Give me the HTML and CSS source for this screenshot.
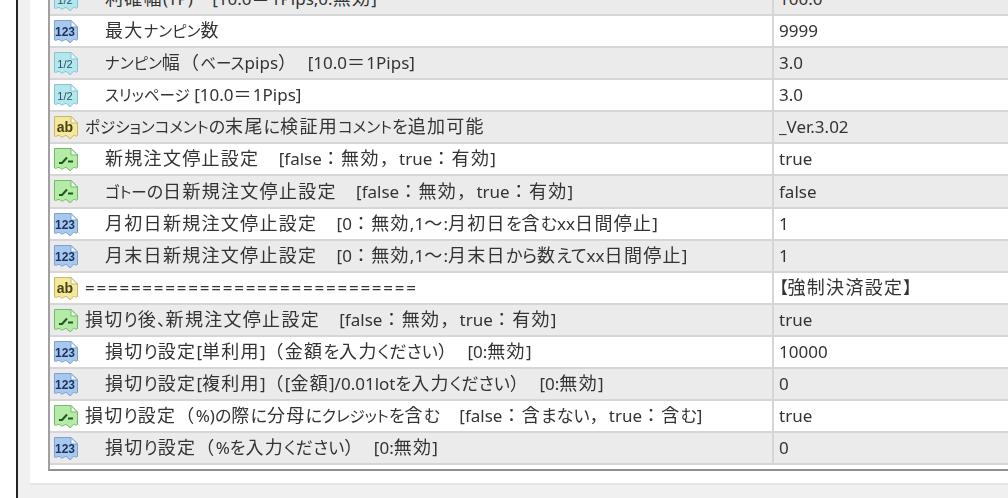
FILE: index.html
```html
<!DOCTYPE html>
<html lang="ja">
<head>
    <meta charset="UTF-8">
    <title>Parameters</title>
    <link rel="stylesheet" href="styles.css">
</head>
<body>
    <svg class="defs" width="0" height="0">
        <symbol id="doc" viewBox="0 0 26 25">
            <path d="M1.5 1.5H18L24.5 8V20.5C23 22 22 20 20.5 20.5C19 21 19 23.5 17 23.5C15 23.5 15 20.5 13 20.5C11 20.5 10.5 22.5 8.5 22C7 21.5 7 20 5 20.5C3.5 21 3 22 1.5 21Z"/>
            <path class="fold" d="M18 1.5V8H24.5Z"/>
        </symbol>
        <symbol id="sw" viewBox="0 0 26 25">
            <path class="glyph" d="M6 16H9L14 10.5M15 14.5H20" fill="none" stroke-width="2"/>
        </symbol>
    </svg>
    <div class="window">
        <div class="panel">
            <div class="grid-clip">
                <table class="grid">
                    <tbody id="rows"></tbody>
                </table>
            </div>
        </div>
    </div>
    <script src="script.js"></script>
</body>
</html>
```
FILE: styles.css
```css
html, body {
    height: 100%;
}

body {
    margin: 0;
    padding-left: 16px;
    background-color: #fff;
    font-family: "Noto Sans", "Noto Sans CJK JP", sans-serif;
    font-size: 17px;
    color: #333;
    overflow: hidden;
}

.defs {
    position: absolute;
}

.window {
    height: 100%;
    box-sizing: border-box;
    padding-left: 12px;
    background-color: #f0f0f0;
    border-left: 2px solid #222;
}

.panel {
    height: 485px;
    box-sizing: border-box;
    padding-left: 18px;
    background-color: #fff;
    border-bottom: 2px solid #e4e4e4;
}

.grid-clip {
    height: 471px;
    box-sizing: border-box;
    overflow: hidden;
    border-left: 2px solid #a0a0a0;
    border-bottom: 2px solid #8f8f8f;
}

.grid {
    width: 958px;
    margin-top: -16px;
    table-layout: fixed;
    border-collapse: separate;
    border-spacing: 0;
    font-feature-settings: "palt";
    filter: blur(0.35px);
}

.grid td {
    height: 32px;
    box-sizing: border-box;
    padding: 0 0 0 5px;
    border-bottom: 2px solid #d6d6d6;
    white-space: nowrap;
    overflow: hidden;
    line-height: 30px;
}

.grid tr:nth-child(7) td {
    height: 33px;
}

.grid td:first-child {
    width: 724px;
    padding-left: 3px;
    border-right: 2px solid #d6d6d6;
}

.odd td {
    background-color: #ebebeb;
}

.kj {
    font-size: 18px;
    line-height: 1;
    letter-spacing: 1.3px;
    font-feature-settings: normal;
}

.hira {
    font-size: 17px;
    line-height: 1;
}

.kata {
    font-size: 15.5px;
    line-height: 1;
}

.rule {
    letter-spacing: 1.75px;
}

.name {
    display: flex;
    align-items: center;
    height: 30px;
    gap: 6px;
}

.name.in {
    gap: 26px;
}

.ico {
    flex: none;
    width: 26px;
    height: 25px;
    stroke-width: 1;
}

.ico text {
    font-family: "Liberation Sans", sans-serif;
    font-size: 12px;
    font-weight: 700;
    text-anchor: middle;
    stroke: none;
}

.fold {
    fill: #f4f8fc;
}

.num {
    fill: #a9c8ee;
    stroke: #7f9fce;
}

.num text {
    fill: #1c3560;
}

.half {
    fill: #b4e6ee;
    stroke: #82c4d0;
}

.half text {
    fill: #1f5560;
    font-size: 11px;
    font-weight: 400;
}

.str {
    fill: #f4e89c;
    stroke: #c9b866;
}

.str text {
    fill: #4a4210;
    font-size: 14px;
}

.bool {
    fill: #b6eaa8;
    stroke: #6fbf62;
}

.glyph {
    stroke: #1c5a1c;
}
```
FILE: script.js
```js
// type, indented, label, value
const params = [
    ["half", true, "利確幅(TP)　[10.0＝1Pips,0:無効]", "100.0"],
    ["num", true, "最大ナンピン数", "9999"],
    ["half", true, "ナンピン幅（ベースpips）　[10.0＝1Pips]", "3.0"],
    ["half", true, "スリッページ [10.0＝1Pips]", "3.0"],
    ["str", false, "ポジションコメントの末尾に検証用コメントを追加可能", "_Ver.3.02"],
    ["bool", true, "新規注文停止設定　[false：無効，true：有効]", "true"],
    ["bool", true, "ゴトーの日新規注文停止設定　[false：無効，true：有効]", "false"],
    ["num", true, "月初日新規注文停止設定　[0：無効,1～:月初日を含むxx日間停止]", "1"],
    ["num", true, "月末日新規注文停止設定　[0：無効,1～:月末日から数えてxx日間停止]", "1"],
    ["str", false, "=============================", "【強制決済設定】"],
    ["bool", false, "損切り後、新規注文停止設定　[false：無効，true：有効]", "true"],
    ["num", true, "損切り設定[単利用]（金額を入力ください）　[0:無効]", "10000"],
    ["num", true, "損切り設定[複利用]（[金額]/0.01lotを入力ください）　[0:無効]", "0"],
    ["bool", false, "損切り設定（%)の際に分母にクレジットを含む　[false：含まない，true：含む]", "true"],
    ["num", true, "損切り設定（%を入力ください）　[0:無効]", "0"]
];

const iconText = { num: "123", half: "1/2", str: "ab" };

// kanji and full-width signs are wider than the kana in this font
function markup(text) {
    return text
        .replace(/=+/g, m => `<span class="rule">${m}</span>`)
        .replace(/[\u4e00-\u9fff：，（）＝　～]+/g, m => `<span class="kj">${m}</span>`)
        .replace(/[\u3001\u3040-\u309f]+/g, m => `<span class="hira">${m}</span>`)
        .replace(/[\u30a0-\u30ff]+/g, m => `<span class="kata">${m}</span>`);
}

function icon(type) {
    const inner = type === "bool"
        ? '<use href="#sw"/>'
        : `<text x="12" y="17">${iconText[type]}</text>`;
    return `<svg class="ico ${type}"><use href="#doc"/>${inner}</svg>`;
}

const tableBody = document.getElementById("rows");

params.forEach(([type, indented, label, value], i) => {
    const row = document.createElement("tr");
    if (i % 2 === 0) row.className = "odd";
    row.innerHTML =
        `<td><div class="name${indented ? " in" : ""}">${icon(type)}<span>${markup(label)}</span></div></td>` +
        `<td>${markup(value)}</td>`;
    tableBody.appendChild(row);
});
```
